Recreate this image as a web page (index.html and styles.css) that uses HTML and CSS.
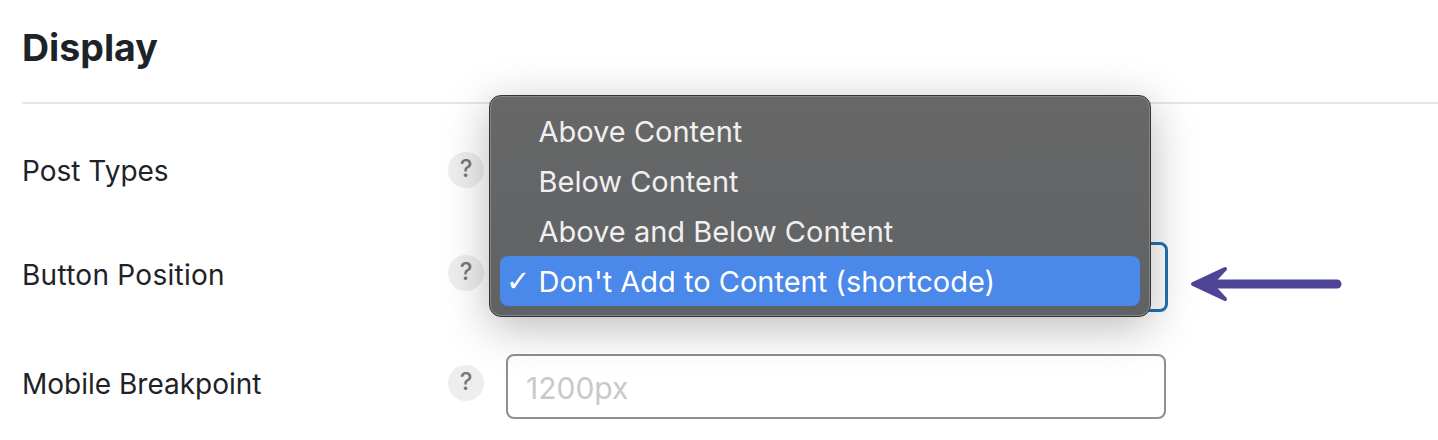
FILE: index.html
```html
<!DOCTYPE html>
<html lang="en">
<head>
  <meta charset="UTF-8" />
  <meta name="viewport" content="width=device-width, initial-scale=1.0" />
  <title>Display settings</title>
  <link rel="stylesheet" href="styles.css">
</head>
<body>
  <main class="settings">
    <h2 class="section-title">Display</h2>

    <div class="row row-types">
      <label class="row-label">Post Types</label>
      <span class="help">?</span>
      <div class="control control-empty"></div>
    </div>

    <div class="row row-position">
      <label class="row-label">Button Position</label>
      <span class="help">?</span>
      <div class="control select-box"></div>
      <svg class="arrow" viewBox="0 0 152 36" aria-hidden="true">
        <path class="arrow-head" d="M3 18 L35 3 L21 18 L35 33 Z"></path>
        <line class="arrow-shaft" x1="20" y1="18" x2="147" y2="18"></line>
      </svg>
    </div>

    <div class="row row-breakpoint">
      <label class="row-label">Mobile Breakpoint</label>
      <span class="help">?</span>
      <input class="control text-input" type="text" placeholder="1200px">
    </div>

    <!-- native select popup, sits over the rows -->
    <ul class="menu">
      <li class="menu-item">Above Content</li>
      <li class="menu-item">Below Content</li>
      <li class="menu-item">Above and Below Content</li>
      <li class="menu-item is-selected"><span class="tick">✓</span>Don't Add to Content (shortcode)</li>
    </ul>
  </main>
</body>
</html>
```

FILE: styles.css
```css
/* Basic Reset */
* {
  margin: 0;
  padding: 0;
  box-sizing: border-box;
}

body {
  background: #fff;
  color: #1d2327;
  font-family: Inter, "Liberation Sans", sans-serif;
  overflow: hidden;
}

.settings {
  position: relative;
  height: 440px;
  padding-left: 22px;
}

/* Heading */
.section-title {
  height: 104px;
  padding-top: 25px;
  font-size: 37.5px;
  line-height: 46px;
  font-weight: 700;
  border-bottom: 2px solid #e6e6e6;
}

/* Rows */
.row {
  display: flex;
  align-items: flex-start;
}
.row-types { height: 138px; padding-top: 37px; }
.row-position { height: 112px; }
.row-breakpoint { height: 86px; }

.row-label {
  width: 426px;
  font-size: 28px;
  line-height: 32px;
}
.row-types .row-label { margin-top: 14px; }
.row-position .row-label { margin-top: 17px; letter-spacing: 0.27px; }
.row-breakpoint .row-label { margin-top: 14px; }

.help {
  width: 36px;
  height: 36px;
  flex: none;
  border-radius: 50%;
  background: #eeeeee;
  color: #777;
  font-size: 24px;
  font-weight: 500;
  line-height: 34px;
  text-align: center;
}
.row-types .help { margin-top: 11px; }
.row-position .help { margin-top: 13px; }
.row-breakpoint .help { margin-top: 11px; }

.control {
  margin-left: 22px;
  flex: none;
}
.control-empty { height: 65px; width: 660px; }

.select-box {
  width: 662px;
  height: 70px;
  border: 3px solid #2271b1;
  border-radius: 8px;
}

.text-input {
  display: block;
  width: 660px;
  height: 65px;
  padding: 3px 18px 0;
  border: 2px solid #8c8f94;
  border-radius: 8px;
  background: #fff;
  font-family: inherit;
  font-size: 30px;
  color: #1d2327;
}
.text-input::placeholder {
  color: #c9c9c9;
}

.arrow {
  flex: none;
  width: 152px;
  height: 36px;
  margin-left: 22px;
  margin-top: 24px;
}
.arrow-head {
  fill: #4e4597;
  stroke: #4e4597;
  stroke-width: 4;
  stroke-linejoin: round;
}
.arrow-shaft {
  stroke: #4e4597;
  stroke-width: 9;
  stroke-linecap: round;
}

/* Dropdown popup */
.menu {
  position: absolute;
  top: 95px;
  left: 489px;
  width: 662px;
  height: 222px;
  padding: 10px 10px 0;
  list-style: none;
  border: 1px solid #333;
  border-radius: 12px;
  background: linear-gradient(180deg, #676767, #5f6265);
  box-shadow: inset 0 0 0 1px #858585, 0 10px 45px rgba(0, 0, 0, 0.28);
}
.menu-item {
  position: relative;
  height: 50px;
  padding-left: 38.5px;
  border-radius: 8px;
  color: #f0f0f0;
  font-size: 29px;
  line-height: 51px;
}
.menu-item.is-selected {
  background: #4a88ea;
  color: #fff;
}
.tick {
  position: absolute;
  left: 6px;
  top: 0;
  font-family: "DejaVu Sans", sans-serif;
  font-size: 29px;
}
```
